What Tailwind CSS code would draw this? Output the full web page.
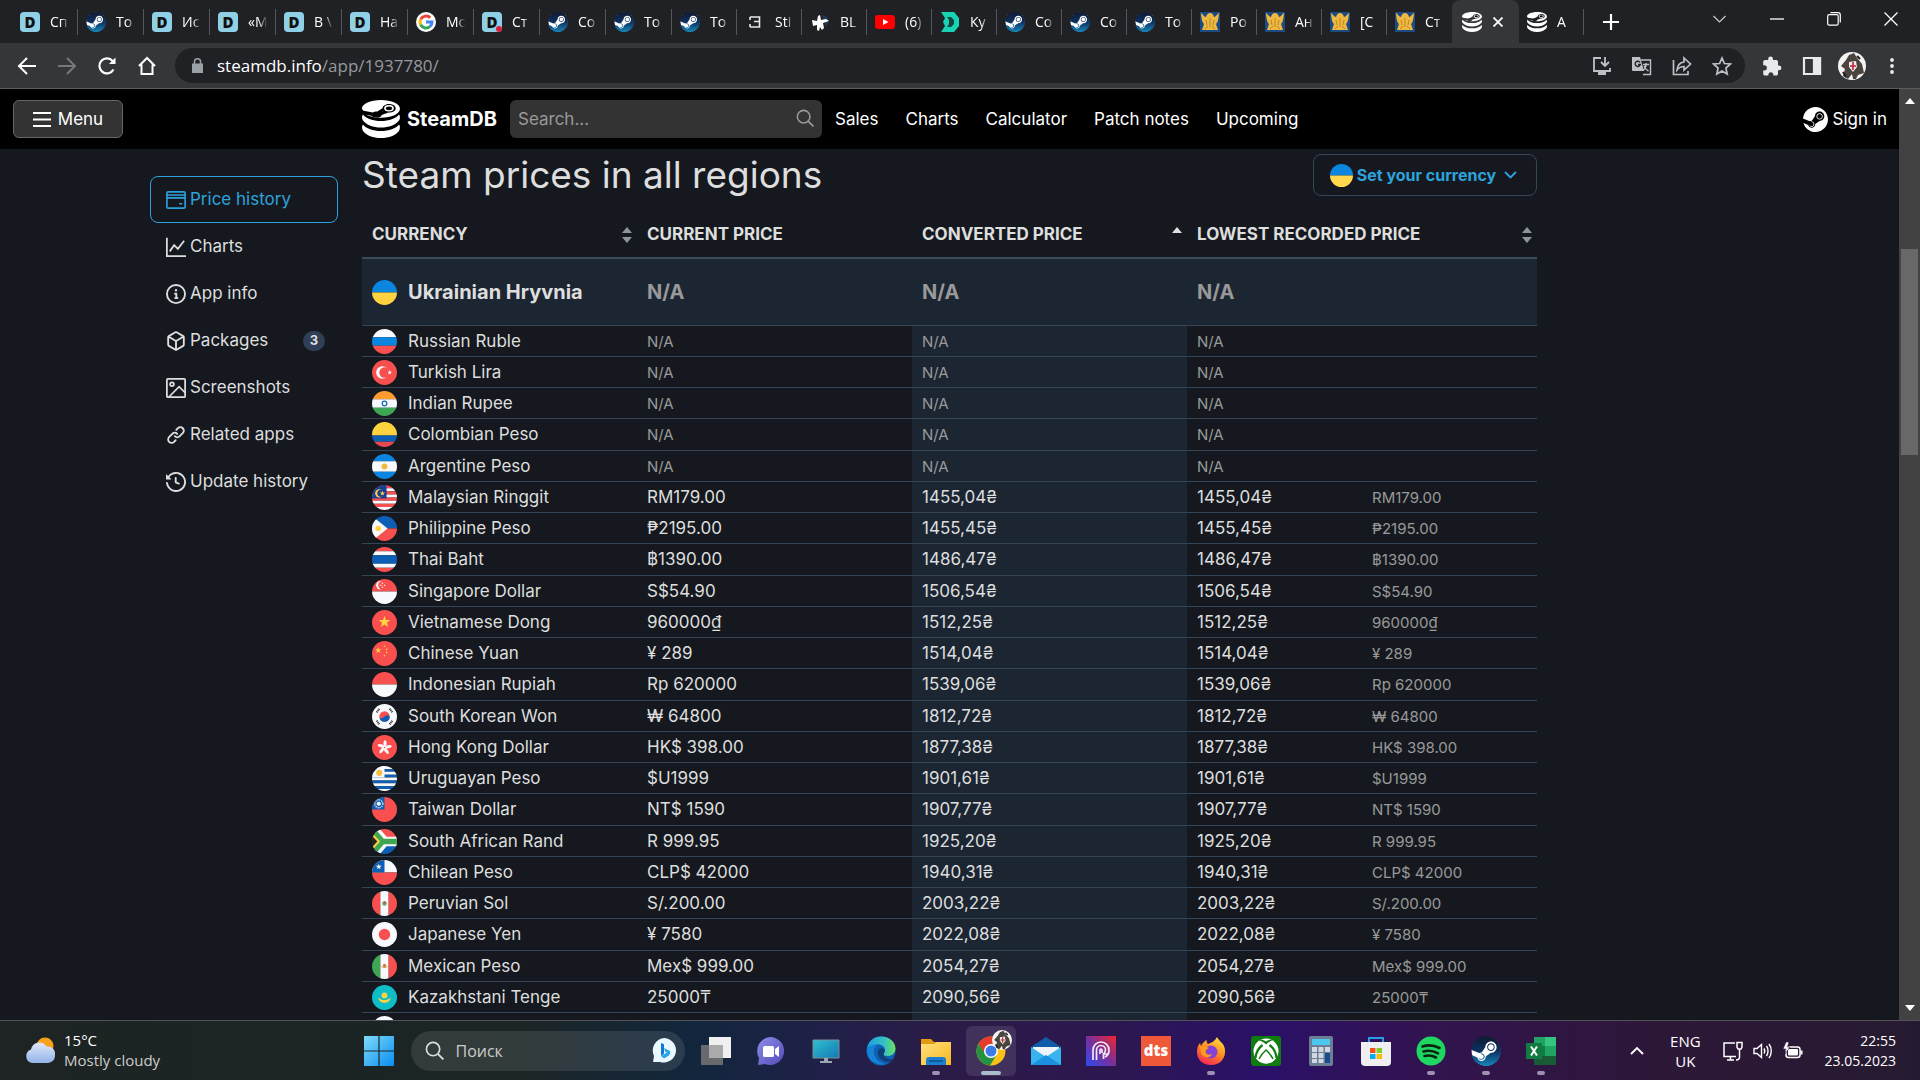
<!DOCTYPE html>
<html lang="en">
<head>
    <meta charset="UTF-8">
    <meta name="viewport" content="width=device-width, initial-scale=1.0">
    <title>Steam prices in all regions - SteamDB</title>
    <script src="https://cdn.jsdelivr.net/npm/@tailwindcss/browser@4"></script>
</head>
<body class="h-screen flex flex-col overflow-hidden bg-[#15191f] text-[#dedede] font-['Inter',sans-serif] text-[17px] leading-[27px]">

    <!-- Icon sprite -->
    <svg class="absolute size-0" aria-hidden="true">
        <defs>
            <linearGradient id="g-steam" x1="0" y1="0" x2="0" y2="1"><stop offset="0" stop-color="#10192f"/><stop offset=".5" stop-color="#0d3160"/><stop offset="1" stop-color="#1684b8"/></linearGradient>
            <linearGradient id="g-win" x1="0" y1="0" x2="1" y2="1"><stop offset="0" stop-color="#7fdcfb"/><stop offset="1" stop-color="#0a8df0"/></linearGradient>
            <linearGradient id="g-sky" x1="0" y1="0" x2="0" y2="1"><stop offset="0" stop-color="#dfe8fb"/><stop offset="1" stop-color="#93b3e8"/></linearGradient>
            <linearGradient id="g-mon" x1="0" y1="0" x2="1" y2="1"><stop offset="0" stop-color="#2fc0d0"/><stop offset="1" stop-color="#1478b4"/></linearGradient>
            <linearGradient id="g-edge" x1="0" y1="0" x2="1" y2="0"><stop offset="0" stop-color="#1b9de2"/><stop offset=".6" stop-color="#35c1c5"/><stop offset="1" stop-color="#6be05c"/></linearGradient>
            <linearGradient id="g-fold" x1="0" y1="0" x2="1" y2="1"><stop offset="0" stop-color="#ffe082"/><stop offset="1" stop-color="#f8b91c"/></linearGradient>
            <linearGradient id="g-n" x1="0" y1="1" x2="1" y2="0"><stop offset="0" stop-color="#2b4bf0"/><stop offset=".5" stop-color="#7b2f9a"/><stop offset="1" stop-color="#f0252d"/></linearGradient>
            <linearGradient id="g-fox" x1=".8" y1="0" x2=".3" y2="1"><stop offset="0" stop-color="#ffe23f"/><stop offset=".5" stop-color="#ff8a1e"/><stop offset="1" stop-color="#f5245c"/></linearGradient>
            <linearGradient id="g-cam" x1="0" y1="0" x2="1" y2="1"><stop offset="0" stop-color="#8f8fe8"/><stop offset="1" stop-color="#5149b8"/></linearGradient>
        </defs>
        <symbol id="i-steam-mark" viewBox="0 0 24 24"><path d="M11.979 0C5.678 0 .511 4.86.022 11.037l6.432 2.658c.545-.371 1.203-.59 1.912-.59.063 0 .125.004.188.006l2.861-4.142V8.91c0-2.495 2.028-4.524 4.524-4.524 2.494 0 4.524 2.031 4.524 4.527s-2.03 4.525-4.524 4.525h-.105l-4.076 2.911c0 .052.004.105.004.159 0 1.875-1.515 3.396-3.39 3.396-1.635 0-3.016-1.173-3.331-2.727L.436 15.27C1.862 20.307 6.486 24 11.979 24c6.627 0 11.999-5.373 11.999-12S18.605 0 11.979 0zM7.54 18.21l-1.473-.61c.262.543.714.999 1.314 1.25 1.297.539 2.793-.076 3.332-1.375.263-.63.264-1.319.005-1.949s-.75-1.121-1.377-1.383c-.624-.26-1.29-.249-1.878-.03l1.523.63c.956.4 1.409 1.5 1.009 2.455-.397.957-1.497 1.41-2.454 1.012H7.54zm11.415-9.303c0-1.662-1.353-3.015-3.015-3.015-1.665 0-3.015 1.353-3.015 3.015 0 1.665 1.35 3.015 3.015 3.015 1.663 0 3.015-1.35 3.015-3.015zm-5.273-.005c0-1.252 1.013-2.266 2.265-2.266 1.249 0 2.266 1.014 2.266 2.266 0 1.251-1.017 2.265-2.266 2.265-1.253 0-2.265-1.014-2.265-2.265z"/></symbol>
        <symbol id="i-steam" viewBox="0 0 24 24"><circle cx="12" cy="12" r="11.500" fill="#fff"/><use href="#i-steam-mark" fill="url(#g-steam)"/></symbol>
        <symbol id="i-db" viewBox="0 0 38 38">
            <path d="M19 0C8.500 0 0 4.200 0 8c0 1 .5 2 1.500 2.800l9.500 1.700c1-.7 2.600-1.100 4.300-1l5.200-3.300c.3-2.600 3.600-4.500 7.200-4.300 3.800.2 6.300 2.300 6 4.800-.3 2.400-3.600 4-7.200 3.800l-6.800 2.400c-.2 1.700-2.500 3-5.300 2.800-1.800-.1-3.400-.8-4.200-1.800L4 14.800C7.500 16.500 13 17.700 19 17.700c10.500 0 19-4 19-9S29.500 0 19 0z"/>
            <ellipse cx="27" cy="8.300" rx="4.800" ry="3.200"/>
            <ellipse cx="27" cy="8.300" rx="3.100" ry="1.900" fill="#000"/>
            <path d="M1 14.500C-.5 16 0 19 1 20.500 4.500 25 11 27.500 19 27.500s14.500-2.500 18-7c1-1.500 1.500-4.500 0-6C34 18.500 27 21 19 21S4 18.500 1 14.500z"/>
            <path d="M1 24.500C-.5 26 0 29 1 31c3.500 4.500 10 7 18 7s14.500-2.500 18-7c1-2 1.500-5 0-6.500C34 28.500 27 31 19 31S4 28.500 1 24.500z"/>
        </symbol>
        <symbol id="i-google" viewBox="0 0 20 20"><circle cx="10" cy="10" r="10" fill="#fff"/><g fill="none" stroke-width="3"><path d="M14.200 5.800A6 6 0 0 0 4.700 7.200" stroke="#ea4335"/><path d="M4.700 7.200a6 6 0 0 0 0 5.600" stroke="#fbbc05"/><path d="M4.700 12.800a6 6 0 0 0 9.300 1.700" stroke="#34a853"/><path d="M14 14.500A6 6 0 0 0 16 10h-6" stroke="#4285f4"/></g></symbol>
        <symbol id="i-box" viewBox="0 0 20 20"><path d="M5 5h9.500v10H5M5 5v3M9 9.500h5.500M5 12v3" fill="none" stroke="#e8e8e8" stroke-width="1.600"/></symbol>
        <symbol id="i-bird" viewBox="0 0 20 20"><path d="M12 3l5 2 2 5-3 5z" fill="#1d3b57"/><path d="M2 8l5 1 1-5 2-1 1 5 5-1 3 2-6 2 1 5-2 2-2-3-1 4-2-1v-5l-4 1z" fill="#fff"/></symbol>
        <symbol id="i-yt" viewBox="0 0 20 20"><rect y="3" width="20" height="14" rx="3" fill="#f00"/><path d="M8 7l5.500 3L8 13z" fill="#fff"/></symbol>
        <symbol id="i-green" viewBox="0 0 20 20"><path d="M1 0h13l5 6v8l-5 6H1l4-6-2-4 2-4z" fill="#17d3b4"/><path d="M7 5h4l3 3v4l-3 3H7l2-3V8z" fill="#14413c"/></symbol>
        <symbol id="i-gold" viewBox="0 0 20 20"><rect width="20" height="20" fill="#1c4a83"/><path d="M1 1c2 1 3 4 5 4 1-3 2-4 4-4s3 1 4 4c2 0 3-3 5-4-.5 6-1 9-3 11l2 6H2l2-6C2 10 1.500 7 1 1z" fill="#efb840"/><path d="M10 6v9M6 8l1 5m7-5l-1 5M5 17l3-3m7 3l-3-3" stroke="#b98527" fill="none"/></symbol>
        <symbol id="i-knight" viewBox="0 0 28 28"><circle cx="14" cy="14" r="14" fill="#f4f4f4"/><path d="M11 3l5-2 3 5 5 6 2 9-6 2-2 4h-3l-1-5-4 5-5-3 2-7-4-3 5-6z" fill="#4b443e"/><path d="M11 10l7-1 1 6-4 5-4-5z" fill="#eee"/><path d="M15 10v8m-3-4h6" stroke="#c0203a" stroke-width="1.600"/><path d="M5 20l3 5m11-21l3 3" stroke="#222" stroke-width="2"/></symbol>
        <symbol id="i-sort" viewBox="0 0 10 16"><path d="M5 0l5 6H0zM5 16l5-6H0z"/></symbol>
        <symbol id="i-search" viewBox="0 0 16 16"><circle cx="6.800" cy="6.800" r="5.600" fill="none" stroke="currentColor" stroke-width="1.400"/><path d="M11 11l4.500 4.500" stroke="currentColor" stroke-width="1.600"/></symbol>
    </svg>

    <!-- Browser tabs -->
    <header class="shrink-0 bg-[#202124] font-['Open_Sans',sans-serif]">
        <div class="h-[43px] flex items-center pl-3">
            <div id="tabs" class="flex h-full items-center"></div>
            <button class="w-[54px] flex justify-center" aria-label="New tab">
                <svg class="size-4" viewBox="0 0 16 16" stroke="#fff" stroke-width="2.200"><path d="M8 0v16M0 8h16"/></svg>
            </button>
            <div class="ml-auto flex h-full items-center pb-[5px]">
                <button class="w-[57px] flex justify-center" aria-label="Search tabs"><svg class="w-[13px] h-2" viewBox="0 0 13 8" fill="none" stroke="#ccc" stroke-width="1.200"><path d="M.5 1l6 6 6-6"/></svg></button>
                <button class="w-[57px] flex justify-center" aria-label="Minimize"><svg class="w-[14px] h-3" viewBox="0 0 14 12" stroke="#fff" stroke-width="1.300"><path d="M0 6h14"/></svg></button>
                <button class="w-[57px] flex justify-center" aria-label="Restore"><svg class="size-[14px]" viewBox="0 0 14 14" fill="none" stroke="#fff" stroke-width="1.200"><rect x=".7" y="2.700" width="10.500" height="10.500" rx="1.500"/><path d="M3.500 .7H11a2.300 2.300 0 0 1 2.300 2.300v7.500"/></svg></button>
                <button class="w-[58px] flex justify-center" aria-label="Close"><svg class="size-[14px]" viewBox="0 0 14 14" stroke="#fff" stroke-width="1.300"><path d="M.5.5l13 13m0-13l-13 13"/></svg></button>
            </div>
        </div>

        <!-- Address bar -->
        <div class="h-[46px] flex items-center bg-[#35363a] border-b border-[#5b5c5f] pl-[17px] pr-2">
            <div class="flex items-center gap-[20px] w-[158px] text-white">
                <button aria-label="Back"><svg class="size-5" viewBox="0 0 20 20" fill="none" stroke="currentColor" stroke-width="2"><path d="M19 10H3m7-8l-8 8 8 8"/></svg></button>
                <button class="text-[#77787b]" aria-label="Forward"><svg class="size-5" viewBox="0 0 20 20" fill="none" stroke="currentColor" stroke-width="2"><path d="M1 10h16m-7-8l8 8-8 8"/></svg></button>
                <button aria-label="Reload"><svg class="size-5" viewBox="0 0 20 20" fill="none" stroke="currentColor" stroke-width="2.200"><path d="M16.500 13.500A7.500 7.500 0 1 1 15.600 5l2 2"/><path d="M18.500 1.500v6.500H12z" fill="currentColor" stroke="none"/></svg></button>
                <button aria-label="Home"><svg class="size-5" viewBox="0 0 20 20" fill="none" stroke="currentColor" stroke-width="2"><path d="M2 10l8-8 8 8M4.500 8.500V18h11V8.500"/></svg></button>
            </div>
            <div class="flex-1 h-[35px] rounded-full bg-[#202124] flex items-center pl-[17px] pr-[13px]">
                <svg class="w-[11px] h-[15px] mr-[14px]" viewBox="0 0 11 15" fill="#9aa0a6"><path d="M0 5.500h11V15H0z"/><path d="M2.500 6V3.800a3 3 0 0 1 6 0V6" fill="none" stroke="#9aa0a6" stroke-width="1.500"/></svg>
                <p class="flex-1 text-[17px] text-[#969a9e]"><span class="text-white">steamdb.info</span>/app/1937780/</p>
                <div class="flex items-center gap-5 text-[#bdc1c6]">
                    <button aria-label="Install"><svg class="size-5" viewBox="0 0 20 20" fill="none" stroke="currentColor" stroke-width="1.800"><path d="M9 2H2v13h16v-3M13 1v9m-4-4l4 4 4-4"/><path d="M6 17.500h8" stroke-width="3"/></svg></button>
                    <button aria-label="Translate"><svg class="size-5" viewBox="0 0 20 20" fill="none" stroke="currentColor" stroke-width="1.400"><path d="M9 4h9.500v14.500H11"/><path d="M0 1h8l4 14H1a1 1 0 0 1-1-1z" fill="currentColor" stroke="none"/><path d="M8 6.500a2.600 2.600 0 1 0 .3 2H6" stroke="#202124"/><path d="M11 8.500h6M14 7v1.500c0 3-1.500 5-3 6m1-4.500c1 2.500 2.500 4 4.500 5"/></svg></button>
                    <button aria-label="Share"><svg class="size-5" viewBox="0 0 20 20" fill="none" stroke="currentColor" stroke-width="1.700"><path d="M1.500 4v14.500H16V15"/><path d="M12 2l6.500 6-6.500 6v-3.500c-3 0-5 1-7 3.500.5-4.500 3-7.500 7-8z"/></svg></button>
                    <button aria-label="Bookmark"><svg class="size-5" viewBox="0 0 20 20" fill="none" stroke="currentColor" stroke-width="1.700"><path d="M10 2l2.400 5.500 6 .5-4.500 4 1.300 6L10 14.900 4.800 18l1.300-6-4.500-4 6-.5z"/></svg></button>
                </div>
            </div>
            <div class="flex items-center pl-[7px] text-[#e8eaed] *:w-10 *:flex *:justify-center">
                <button aria-label="Extensions"><svg class="size-5" viewBox="0 0 20 20" fill="currentColor"><path d="M17 9.500h-1V5.800A1.800 1.800 0 0 0 14.200 4H11V2.900a2.400 2.400 0 0 0-4.800 0V4H3a1.800 1.800 0 0 0-1.800 1.800v3.400h1.100a2.600 2.600 0 0 1 0 5.200H1.200v3.300c0 1 .8 1.800 1.800 1.800h3.300v-1.100a2.600 2.600 0 0 1 5.100 0v1.100h2.800c1 0 1.800-.8 1.800-1.800V14.300H17a2.400 2.400 0 0 0 0-4.800z"/></svg></button>
                <button aria-label="Side panel"><svg class="size-5" viewBox="0 0 20 20" fill="none" stroke="currentColor" stroke-width="2.200"><path d="M2 2h16v16H2z"/><path d="M12 2h6v16h-6z" fill="currentColor"/></svg></button>
                <button aria-label="Profile"><svg class="size-7"><use href="#i-knight"/></svg></button>
                <button aria-label="More"><svg class="w-1 h-4" viewBox="0 0 4 16" fill="currentColor"><circle cx="2" cy="2" r="1.900"/><circle cx="2" cy="8" r="1.900"/><circle cx="2" cy="14" r="1.900"/></svg></button>
            </div>
        </div>
    </header>

    <div class="flex-1 min-h-0 flex">
        <div class="flex-1 min-w-0 overflow-hidden">
            <!-- Site header -->
            <nav class="h-[60px] bg-black text-white grid grid-cols-[1fr_1175px_1fr] items-start pt-[11px]">
                <div class="pl-[13px]">
                    <button class="h-[38px] w-[110px] flex items-center justify-center gap-[7px] rounded-md border border-[#666] bg-[#333]">
                        <svg class="w-[18px] h-[15px]" viewBox="0 0 18 15" stroke="#fff" stroke-width="1.800"><path d="M0 1h18M0 7.500h18M0 14h18"/></svg>
                        Menu
                    </button>
                </div>
                <div class="flex items-center h-[38px]">
                    <a href="#" class="flex items-center gap-[7px] w-[148px] text-[20px] font-bold"><svg class="size-[38px]" fill="#fff"><use href="#i-db"/></svg>SteamDB</a>
                    <label class="relative w-[312px]">
                        <input type="search" placeholder="Search..." aria-label="Search" class="w-full h-[38px] rounded-md bg-[#333] px-2 placeholder:text-[#999]">
                        <svg class="absolute right-2 top-[9px] size-[18px] text-[#999]"><use href="#i-search"/></svg>
                    </label>
                    <div class="flex gap-[27px] pl-[13px]">
                        <a href="#">Sales</a>
                        <a href="#">Charts</a>
                        <a href="#">Calculator</a>
                        <a href="#">Patch notes</a>
                        <a href="#">Upcoming</a>
                    </div>
                </div>
                <a href="#" class="flex items-center justify-end gap-[5px] h-[38px] pr-3"><svg class="size-[25px]" fill="#fff"><use href="#i-steam-mark"/></svg>Sign in</a>
            </nav>

            <div class="grid grid-cols-[1fr_1175px_1fr]">
                <!-- Sidebar -->
                <aside class="mt-[27px] mr-6 w-[188px] justify-self-end">
                    <a href="#" class="h-[47px] flex items-center gap-1 px-[15px] rounded-lg border border-[#2ea2dc] text-[#2ea2dc]">
                        <svg class="size-5" viewBox="0 0 16 16" fill="none" stroke="currentColor" stroke-width="1.300"><rect x=".7" y="1.500" width="14.600" height="13" rx="1"/><path d="M.7 4h14.600M.7 6.300h14.600M10.500 11h2.500"/></svg>
                        Price history
                    </a>
                    <a href="#" class="h-[47px] flex items-center gap-1 px-4">
                        <svg class="size-5" viewBox="0 0 16 16" fill="none" stroke="currentColor" stroke-width="1.400"><path d="M.7.500v14.800H16M3 11.500l3.500-5 3 3 5-6.500"/></svg>
                        Charts
                    </a>
                    <a href="#" class="h-[47px] flex items-center gap-1 px-4">
                        <svg class="size-5" viewBox="0 0 16 16" fill="currentColor"><path d="M0 8a8 8 0 1 1 16 0A8 8 0 0 1 0 8Zm8-6.500a6.500 6.500 0 1 0 0 13 6.500 6.500 0 0 0 0-13ZM6.500 7.750A.75.75 0 0 1 7.250 7h1a.75.75 0 0 1 .75.75v2.750h.25a.75.75 0 0 1 0 1.500h-2a.75.75 0 0 1 0-1.500h.25v-2h-.25a.75.75 0 0 1-.75-.75ZM8 6a1 1 0 1 1 0-2 1 1 0 0 1 0 2Z"/></svg>
                        App info
                    </a>
                    <a href="#" class="h-[47px] flex items-center gap-1 pl-4 pr-[13px]">
                        <svg class="size-5" viewBox="0 0 16 16" fill="currentColor"><path d="m8.878.392 5.250 3.045c.54.314.872.89.872 1.514v6.098a1.750 1.750 0 0 1-.872 1.514l-5.250 3.045a1.750 1.750 0 0 1-1.756 0l-5.250-3.045A1.750 1.750 0 0 1 1 11.049V4.951c0-.624.332-1.201.872-1.514L7.122.392a1.750 1.750 0 0 1 1.756 0ZM7.875 1.690l-4.630 2.685L8 7.133l4.755-2.758-4.630-2.685a.248.248 0 0 0-.25 0ZM2.500 5.677v5.372c0 .09.047.171.125.216l4.625 2.683V8.432Zm6.250 8.271 4.625-2.683a.25.25 0 0 0 .125-.216V5.677L8.750 8.432Z"/></svg>
                        Packages
                        <span class="ml-auto w-[22px] h-5 rounded-full bg-[#2f3f56] text-[13px] font-bold flex items-center justify-center">3</span>
                    </a>
                    <a href="#" class="h-[47px] flex items-center gap-1 px-4">
                        <svg class="size-5" viewBox="0 0 16 16" fill="none" stroke="currentColor" stroke-width="1.400"><rect x=".7" y=".7" width="14.600" height="14.600" rx=".8"/><circle cx="4.800" cy="5" r="1.500"/><path d="M2.500 15L10.500 7l5 5"/></svg>
                        Screenshots
                    </a>
                    <a href="#" class="h-[47px] flex items-center gap-1 px-4">
                        <svg class="size-5" viewBox="0 0 16 16" fill="currentColor"><path d="m7.775 3.275 1.250-1.250a3.500 3.500 0 1 1 4.950 4.950l-2.500 2.500a3.500 3.500 0 0 1-4.950 0 .751.751 0 0 1 .018-1.042.751.751 0 0 1 1.042-.018 1.998 1.998 0 0 0 2.830 0l2.500-2.500a2.002 2.002 0 0 0-2.830-2.830l-1.250 1.250a.751.751 0 0 1-1.042-.018.751.751 0 0 1-.018-1.042Zm-4.690 9.640a1.998 1.998 0 0 0 2.830 0l1.250-1.250a.751.751 0 0 1 1.042.018.751.751 0 0 1 .018 1.042l-1.250 1.250a3.500 3.500 0 1 1-4.950-4.950l2.500-2.500a3.500 3.500 0 0 1 4.950 0 .751.751 0 0 1-.018 1.042.751.751 0 0 1-1.042.018 1.998 1.998 0 0 0-2.830 0l-2.500 2.500a1.998 1.998 0 0 0 0 2.830Z"/></svg>
                        Related apps
                    </a>
                    <a href="#" class="h-[47px] flex items-center gap-1 px-4">
                        <svg class="size-5" viewBox="0 0 16 16" fill="currentColor"><path d="m.427 1.927 1.215 1.215a8.002 8.002 0 1 1-1.600 5.685.75.75 0 1 1 1.493-.154 6.500 6.500 0 1 0 1.180-4.458l1.358 1.358A.25.25 0 0 1 3.896 6H.25A.25.25 0 0 1 0 5.750V2.104a.25.25 0 0 1 .427-.177ZM7.750 4a.75.75 0 0 1 .75.75v2.992l2.028.812a.75.75 0 0 1-.557 1.392l-2.500-1A.751.751 0 0 1 7 8.250v-3.500A.75.75 0 0 1 7.750 4Z"/></svg>
                        Update history
                    </a>
                </aside>

                <!-- Price table -->
                <main class="pt-[5px]">
                    <div class="flex items-center justify-between h-[42px]">
                        <h1 class="text-[37px] leading-[42px]">Steam prices in all regions</h1>
                        <button class="h-[42px] w-[224px] flex items-center justify-center gap-1 pr-[3px] rounded-lg border border-[#34465a] text-base font-bold text-[#2ea2dc]">
                            <svg class="size-[23px] rounded-full" viewBox="0 0 24 24"><path fill="#0a86e0" d="M0 0h24v12H0z"/><path fill="#ffd84d" d="M0 12h24v12H0z"/></svg>
                            Set your currency
                            <svg class="ml-1 w-[13px] h-2" viewBox="0 0 13 8" fill="none" stroke="currentColor" stroke-width="1.800"><path d="M1 1l5.500 5.500L12 1"/></svg>
                        </button>
                    </div>
                    <table class="mt-4 w-full table-fixed border-separate border-spacing-0 text-left">
                        <colgroup>
                            <col class="w-[275px]"><col class="w-[275px]"><col class="w-[275px]"><col class="w-[175px]"><col class="w-[175px]">
                        </colgroup>
                        <thead>
                            <tr class="*:h-[47px] *:px-[10px] *:border-b-2 *:border-[#3b4b5c] *:font-bold">
                                <th class="pr-1!"><div class="flex items-center justify-between">CURRENCY <svg class="w-[10px] h-4 mr-[1px]" fill="#8f9499"><use href="#i-sort"/></svg></div></th>
                                <th>CURRENT PRICE</th>
                                <th class="pr-1!"><div class="flex items-center justify-between">CONVERTED PRICE <svg class="w-[10px] h-4 mr-[1px]" viewBox="0 0 10 16" fill="#dedede"><path d="M5 0l5 6H0z"/></svg></div></th>
                                <th colspan="2" class="pr-1!"><div class="flex items-center justify-between">LOWEST RECORDED PRICE <svg class="w-[10px] h-4 mr-[1px]" fill="#8f9499"><use href="#i-sort"/></svg></div></th>
                            </tr>
                        </thead>
                        <tbody id="prices"></tbody>
                    </table>
                </main>
            </div>
        </div>

        <!-- Page scrollbar -->
        <div class="w-[21px] bg-[#424242] flex flex-col items-center py-2">
            <svg class="w-[10px] h-2" viewBox="0 0 10 8" fill="#fff"><path d="M5 1l5 6H0z"/></svg>
            <div class="mt-[144px] w-[17px] h-[206px] bg-[#686868]"></div>
            <svg class="mt-auto w-[10px] h-2" viewBox="0 0 10 8" fill="#fff"><path d="M5 7l5-6H0z"/></svg>
        </div>
    </div>

    <!-- Taskbar -->
    <footer class="h-[60px] shrink-0 border-t border-[#55535a] grid grid-cols-[1fr_auto_1fr] items-center text-sm text-white font-['Open_Sans',sans-serif] bg-[linear-gradient(90deg,#1d2423_0%,#1b2525_27%,#12263c_36%,#202048_43%,#2c1b48_50%,#2c1750_58%,#2a1068_66%,#321350_74%,#2d1738_86%,#251b30_100%)]">
        <div class="flex items-center gap-[9px] pl-[25px] pb-[2px]">
            <svg class="w-[30px] h-[26px]" viewBox="0 0 30 26"><circle cx="20" cy="9" r="8.500" fill="#f7a01d"/><path d="M7 26a7 7 0 0 1-1-13.500A8.500 8.500 0 0 1 21.500 9.500 7.500 7.500 0 0 1 30 18a7.500 7.500 0 0 1-7 8z" fill="url(#g-sky)"/></svg>
            <div class="leading-5 text-[15px]">
                <p>15°C</p>
                <p class="text-[#ccc]">Mostly cloudy</p>
            </div>
        </div>

        <div class="flex items-center">
            <button class="w-[55px] flex justify-center" aria-label="Start"><svg class="size-[30px]" viewBox="0 0 30 30" fill="url(#g-win)"><path d="M0 0h14.400v14.400H0zM15.600 0H30v14.400H15.600zM0 15.600h14.400V30H0zM15.600 15.600H30V30H15.600z"/></svg></button>
            <label class="mx-1 w-[274px] h-10 rounded-full bg-white/10 flex items-center gap-3 pl-[14px] pr-2 text-base">
                <svg class="size-[19px] text-[#ddd] shrink-0"><use href="#i-search"/></svg>
                <input type="text" placeholder="Поиск" aria-label="Поиск" class="flex-1 min-w-0 bg-transparent placeholder:text-[#ccc]">
                <svg class="size-[25px] shrink-0" viewBox="0 0 25 25"><path d="M12.500 0A12.300 12.300 0 1 1 8 24H1l1-6A12.500 12.500 0 0 1 12.500 0z" fill="#e9f8ff"/><path d="M9 5l3 1.200v9.500l-3 2.300z" fill="#1377d8"/><path d="M12 10l6 3c.8 2.500-.5 4-2 5l-4 2.500L9 18l6-3.500-2-1z" fill="#25a7e8"/></svg>
            </label>
            <div id="apps" class="flex items-center"></div>
        </div>

        <div class="flex items-center justify-end pr-6">
            <button class="mr-[26px]" aria-label="Show hidden icons"><svg class="w-[14px] h-[9px]" viewBox="0 0 14 9" fill="none" stroke="#fff" stroke-width="1.900"><path d="M1 8l6-6 6 6"/></svg></button>
            <div class="text-center leading-5 mr-[22px] text-[15px]"><p>ENG</p><p>UK</p></div>
            <div class="flex items-center gap-[10px] mr-[22px]">
                <svg class="size-5" viewBox="0 0 20 20" fill="none" stroke="#fff" stroke-width="1.500"><path d="M12 2H1v13.500h12M4 19h7M7.500 15.500V19M14 1.500h5V6l-1 2h-3l-1-2zM16.500 8v8c0 2-1 3-3.500 3"/></svg>
                <svg class="size-5" viewBox="0 0 20 20" fill="none" stroke="#fff" stroke-width="1.400"><path d="M1 7.500h3l4.500-4v13l-4.500-4H1zM11 7.500c1 1.500 1 3.500 0 5M13.500 5c2 2.800 2 7.200 0 10M16 3c3 4 3 10 0 14"/></svg>
                <svg class="size-5" viewBox="0 0 20 20"><rect x="3" y="6" width="14" height="10.500" rx="2.500" fill="none" stroke="#fff" stroke-width="1.500"/><rect x="5" y="8" width="10" height="6.500" rx="1" fill="#fff"/><path d="M18.500 9.500v4" stroke="#fff" stroke-width="2"/><path d="M3 1L0 8h3l-1 5 5-7H4.500L6 1z" fill="#fff" stroke="#2d1738" stroke-width=".6"/></svg>
            </div>
            <div class="text-right leading-5"><p>22:55</p><p>23.05.2023</p></div>
        </div>
    </footer>

    <script>
        // [icon, title], the icon "d" is a letter tile
        const tabs = [
            ['d', 'Сп'], ['steam', 'То'], ['d', 'Ис'], ['d', '«М'], ['d', 'В \\'], ['d', 'На'],
            ['google', 'Мо'], ['d-live', 'Ст'], ['steam', 'Со'], ['steam', 'То'], ['steam', 'То'],
            ['box', 'Sti'], ['bird', 'BL'], ['yt', '(6)'], ['green', 'Ку'], ['steam', 'Со'],
            ['steam', 'Со'], ['steam', 'То'], ['gold', 'Ро'], ['gold', 'Ан'], ['gold', '[С'],
            ['gold', 'Ст'], ['db', ''], ['db', 'A']
        ];

        function tabIcon(name) {
            if (name === 'd' || name === 'd-live') {
                const dot = name === 'd-live' ? '<i class="absolute right-0 bottom-0 size-[6px] rounded-full bg-[#d6203c]"></i>' : '';
                return `<span class="relative size-5 shrink-0 rounded-sm bg-[#8fd0e6] text-[#111] text-[15px] leading-5 font-extrabold text-center">D${dot}</span>`;
            }
            return `<svg class="size-5 shrink-0" fill="#fff"><use href="#i-${name}"/></svg>`;
        }

        document.getElementById('tabs').innerHTML = tabs.map(([icon, title], i) => {
            if (!title) {
                return `<button class="h-full w-[67px] flex items-center gap-[11px] pl-[10px] rounded-t-lg bg-[#35363a]">${tabIcon(icon)}
                    <svg class="size-[10px]" viewBox="0 0 10 10" stroke="#fff" stroke-width="1.800"><path d="M.5.5l9 9m0-9l-9 9"/></svg></button>`;
            }
            const width = i < 10 ? 'w-[66px]' : 'w-[65px]';
            const edge = i === 21 ? '' : 'border-r border-[#55575b]';
            return `<button class="${width} ${edge} h-[26px] flex items-center gap-[10px] pl-2">${tabIcon(icon)}
                <span class="w-6 whitespace-nowrap text-left text-sm text-white [mask-image:linear-gradient(90deg,#000_45%,transparent_80%)]">${title}</span></button>`;
        }).join('');

        const R = '#f94f4f', W = '#f7f9fc', B = '#0a86e0', N = '#0c5fb4', Y = '#ffd23f', G = '#3fa654';
        const rect = (x, y, w, h, c) => `<path fill="${c}" d="M${x} ${y}h${w}v${h}h-${w}z"/>`;
        const dot = (x, y, r, c) => `<circle cx="${x}" cy="${y}" r="${r}" fill="${c}"/>`;
        const star = (x, y, r, c) => {
            let pts = '';
            for (let i = 0; i < 10; i++) {
                const a = Math.PI * i / 5, k = i % 2 ? r * 0.4 : r;
                pts += `${(x + k * Math.sin(a)).toFixed(1)},${(y - k * Math.cos(a)).toFixed(1)} `;
            }
            return `<polygon points="${pts}" fill="${c}"/>`;
        };
        // rows of horizontal stripes: [height, colour]
        const bands = (...list) => { let y = 0; return list.map(([h, c]) => { const s = rect(0, y, 24, h, c); y += h; return s; }).join(''); };

        const flags = {
            ua: bands([12, B], [12, Y]),
            ru: bands([8, W], [8, B], [8, R]),
            tr: rect(0, 0, 24, 24, R) + dot(10, 12, 6, W) + dot(12, 12, 5, R) + star(17, 12, 2.4, W),
            in: bands([8, '#ff9b2e'], [8, W], [8, G]) + '<circle cx="12" cy="12" r="2.200" fill="none" stroke="#1266b8" stroke-width="1.200"/>',
            co: bands([13, Y], [6, N], [5, '#e8484e']),
            ar: bands([7, B], [10, W], [7, B]) + dot(12, 12, 2.8, '#f4b845'),
            my: bands([3, R], [3, W], [3, R], [3, W], [3, R], [3, W], [3, R], [3, W]) + rect(0, 0, 14, 13, '#1a3f93') + dot(7, 8, 4, Y) + dot(8.5, 8, 3.4, '#1a3f93') + star(10, 8, 2.6, Y),
            ph: bands([12, N], [12, R]) + `<path fill="${W}" d="M0 0l15 12L0 24z"/>` + dot(6, 12, 2.6, Y),
            th: bands([4, R], [4, W], [8, N], [4, W], [4, R]),
            sg: bands([12, R], [12, W]) + dot(8, 6, 4, W) + dot(10, 6, 4, R) + dot(10, 4, .7, W) + dot(12, 6, .7, W) + dot(10, 8, .7, W) + dot(8.5, 6, .7, W),
            vn: rect(0, 0, 24, 24, R) + star(12, 11.5, 6, Y),
            cn: rect(0, 0, 24, 24, R) + star(6, 9, 3.2, Y) + dot(12, 5, .8, Y) + dot(14, 8, .8, Y) + dot(14, 11, .8, Y) + dot(12, 14, .8, Y),
            id: bands([12, R], [12, W]),
            kr: rect(0, 0, 24, 24, W) + dot(12, 12, 5, R) + '<path fill="#0c5fb4" d="M7.200 13.500A5 5 0 0 0 17 12c-1.500-2-4-1-5 0s-3 2.500-4.800 1.500z"/><path stroke="#333" stroke-width="2" stroke-dasharray="1 .6" d="M4.500 8L7 4.500M17 4.500L19.500 8M4.500 16L7 19.500M17 19.500l2.500-3.500"/>',
            hk: rect(0, 0, 24, 24, R) + [0, 72, 144, 216, 288].map(a => `<ellipse cx="12.500" cy="8.300" rx="1.500" ry="3.300" fill="${W}" transform="rotate(${a} 12 12)"/>`).join(''),
            uy: bands([3, W], [2.5, N], [3, W], [2.5, N], [3, W], [2.5, N], [3, W], [2.5, N], [2, W]) + rect(0, 0, 12, 11, W) + dot(7, 6.5, 3, '#f7c043'),
            tw: rect(0, 0, 24, 24, R) + rect(0, 0, 12, 12, N) + '<circle cx="6.500" cy="6.500" r="3.800" fill="none" stroke="#fff" stroke-width="1.400" stroke-dasharray="1 1"/>' + dot(6.5, 6.5, 2, W),
            za: bands([12, R], [12, N]) + `<path d="M0-2l12 14L0 26M11 12h14" fill="none" stroke="${W}" stroke-width="9"/><path d="M0 2l9 10-9 10z" fill="#222"/><path d="M-2-2l12 14L-2 26M10 12h15" fill="none" stroke="${G}" stroke-width="5.500"/><path d="M0 5l6.500 7L0 19" fill="none" stroke="${Y}" stroke-width="2"/>`,
            cl: rect(0, 0, 24, 12, W) + rect(0, 12, 24, 12, R) + rect(0, 0, 12, 12, N) + star(6.5, 6.5, 3, W),
            pe: rect(0, 0, 8, 24, R) + rect(8, 0, 8, 24, W) + rect(16, 0, 8, 24, R) + dot(12, 12, 2.2, '#7f9a6e') + dot(12, 11, 1, '#b0543c'),
            jp: rect(0, 0, 24, 24, W) + dot(12, 12, 5.5, R),
            mx: rect(0, 0, 8, 24, G) + rect(8, 0, 8, 24, W) + rect(16, 0, 8, 24, R) + '<path d="M8.500 11c2 2 5 2 7 0-.5 3-6.500 3-7 0z" fill="#c98a3c"/>' + dot(12, 11, 1.6, '#d07a3a'),
            kz: rect(0, 0, 24, 24, '#0fbdc9') + dot(12, 10, 2.8, Y) + `<path d="M6 12c2 2 4 2.500 6 2.500s4-.5 6-2.500c-.5 3.500-3 5-6 5s-5.500-1.500-6-5z" fill="${Y}"/>`,
            us: bands([4, W], [2, R], [2, W], [2, R], [14, W])
        };

        // [flag, currency, current price, converted price]
        const prices = [
            ['ua', 'Ukrainian Hryvnia'], ['ru', 'Russian Ruble'], ['tr', 'Turkish Lira'], ['in', 'Indian Rupee'],
            ['co', 'Colombian Peso'], ['ar', 'Argentine Peso'],
            ['my', 'Malaysian Ringgit', 'RM179.00', '1455,04₴'],
            ['ph', 'Philippine Peso', '₱2195.00', '1455,45₴'],
            ['th', 'Thai Baht', '฿1390.00', '1486,47₴'],
            ['sg', 'Singapore Dollar', 'S$54.90', '1506,54₴'],
            ['vn', 'Vietnamese Dong', '960000₫', '1512,25₴'],
            ['cn', 'Chinese Yuan', '¥ 289', '1514,04₴'],
            ['id', 'Indonesian Rupiah', 'Rp 620000', '1539,06₴'],
            ['kr', 'South Korean Won', '₩ 64800', '1812,72₴'],
            ['hk', 'Hong Kong Dollar', 'HK$ 398.00', '1877,38₴'],
            ['uy', 'Uruguayan Peso', '$U1999', '1901,61₴'],
            ['tw', 'Taiwan Dollar', 'NT$ 1590', '1907,77₴'],
            ['za', 'South African Rand', 'R 999.95', '1925,20₴'],
            ['cl', 'Chilean Peso', 'CLP$ 42000', '1940,31₴'],
            ['pe', 'Peruvian Sol', 'S/.200.00', '2003,22₴'],
            ['jp', 'Japanese Yen', '¥ 7580', '2022,08₴'],
            ['mx', 'Mexican Peso', 'Mex$ 999.00', '2054,27₴'],
            ['kz', 'Kazakhstani Tenge', '25000₸', '2090,56₴'],
            ['us', '', '', '']
        ];

        document.getElementById('prices').innerHTML = prices.map(([code, name, price, converted], i) => {
            const flag = `<svg class="size-[25px] rounded-full shrink-0" viewBox="0 0 24 24">${flags[code]}</svg>`;
            const row = i === 0
                ? '*:h-[67px] bg-[#1c2633] text-[20px] font-bold *:not-first:text-[#999]'
                : '*:h-[31px] nth-[4n+1]:*:h-8';
            const na = price === undefined ? (i === 0 ? '' : 'text-[15px] text-[#999]') : '';
            return `<tr class="${row} *:px-[10px] *:border-b *:border-[#364555]">
                <td><div class="flex items-center gap-[11px] h-[25px]">${flag}${name}</div></td>
                <td class="${na}">${price ?? 'N/A'}</td>
                <td class="${na} bg-[#1c2633]">${converted ?? 'N/A'}</td>
                <td class="${na}">${converted ?? 'N/A'}</td>
                <td class="text-[15px] text-[#999]">${price ?? ''}</td>
            </tr>`;
        }).join('');

        // [label, drawing, state]
        const apps = [
            ['Task view', '<path fill="#f0f0f0" d="M8 1h22v21H8z"/><path fill="#777" fill-opacity=".85" d="M0 9h22v20H0z"/><path fill="#aaa" d="M8 9h14v13H8z"/>'],
            ['Chat', '<path d="M15 1a14 14 0 1 1-6 27l-7 1 1-7A14 14 0 0 1 15 1z" fill="url(#g-cam)"/><rect x="7" y="10" width="11" height="11" rx="1.500" fill="#fff"/><path d="M19 13l4-3v11l-4-3z" fill="#fff"/>'],
            ['Monitor', '<path fill="url(#g-mon)" stroke="#7d8f9a" d="M2 4h26v18H2z"/><path d="M13 22h4v3h4v2H9v-2h4z" fill="#9aa6ad"/>'],
            ['Edge', '<circle cx="15" cy="15" r="14.500" fill="#0f5fb4"/><path d="M1 13C2 5 8 .5 15 .5c9 0 14.500 6 14.500 12 0 5-4 7.500-8 7.500-3 0-4-1-4-2 0-.8 1.500-1.500 1.500-4 0-3-3-5.500-7-5.500S3 10 1 13z" fill="url(#g-edge)"/><path d="M1 13c2-3 7-4.500 11-4.500-4 2-5 6-3.500 10.500 1.500 5 6 8 11 9A14.500 14.500 0 0 1 1 13z" fill="#1583d6"/><path d="M12 15c-1 5 3 11 10 11 3 0 5-2 6-3.500-4 1.500-9 .5-10.500-4-.5-1 1.500-2 1.500-4.500-3-3-6-2-7 1z" fill="#133f78"/>'],
            ['Explorer', '<path d="M0 3h10l3 3h17v23H0z" fill="#e39a12"/><path d="M0 8h13l3-2h14v23H0z" fill="url(#g-fold)"/><path d="M5 29v-5a3 3 0 0 1 3-3h14a3 3 0 0 1 3 3v5z" fill="#1a7fd0"/><path d="M8 25h14" stroke="#0a4f8c" stroke-width="1.500"/>', 'open'],
            ['Chrome', '<circle cx="15" cy="15" r="14.500" fill="#fbc116"/><path d="M15 .5A14.500 14.500 0 0 0 2.400 7.800L9 19l6-11h12.500A14.500 14.500 0 0 0 15 .5z" fill="#e33b2e"/><path d="M2.400 7.800A14.500 14.500 0 0 0 14 29.500L20.500 19 9 18z" fill="#229342"/><circle cx="15" cy="15" r="7" fill="#fff"/><circle cx="15" cy="15" r="5.500" fill="#3b7de8"/>', 'active'],
            ['Mail', '<path d="M0 11L15 1l15 10v8H0z" fill="#0f5ca8"/><path d="M2 11h26v9H2z" fill="#eef4fa"/><path d="M0 11l15 10 15-10v18H0z" fill="#37b4f0"/><path d="M0 29l15-10 15 10z" fill="#1c8fe0"/>'],
            ['Music', '<path fill="url(#g-n)" d="M0 0h30v30H0z"/><path d="M7 24V14a8 8 0 0 1 16 0c0 4-2 6-4 7M10.500 24V14a4.500 4.500 0 0 1 9 0c0 2-1 3-2 4m0 0h4m-4-1v6M14 18v-4a1 1 0 0 1 2 0v3" fill="none" stroke="#f3eaf6" stroke-width="1.700"/>'],
            ['DTS', '<path fill="#f0583a" d="M0 0h30v30H0z"/><text x="15" y="20" text-anchor="middle" font-size="15" font-weight="800" fill="#fff">dts</text>'],
            ['Firefox', '<path d="M21 1c1 3 5 5 7 9 3 7 0 19-13 19C6 29 1 23 1 16c0-4 1-7 3-9l1 3c1-2 3-5 6-6-1 2 0 3 1 4 3-1 7-3 9-7z" fill="url(#g-fox)"/><circle cx="15" cy="16" r="6.500" fill="#8243d6"/><path d="M4 11c4-2 7 0 9 1-3 1-4 3-3 5s4 2 6 1c-1 4-9 5-11-1z" fill="#ff9a1f"/>', 'open'],
            ['Xbox', '<rect width="30" height="30" rx="3" fill="#107c10"/><circle cx="15" cy="15" r="12.500" fill="#fff"/><path d="M7 4c3-1.500 6 0 8 1.500C17 4 20 2.500 23 4c-3 .5-6 2.500-8 4.500C13 6.500 10 4.500 7 4z" fill="#107c10"/><path d="M11.500 9C7.500 12 5 17 4.500 22M18.500 9c4 3 6.500 8 7 13" stroke="#107c10" stroke-width="2.200" fill="none"/><path d="M15 13c4 3.500 7 8 8 11.500-4 4-12 4-16 0C8 21 11 16.500 15 13z" fill="#fff"/><path d="M8 23c2-4 4-6.500 7-9 3 2.500 5 5 7 9" fill="none" stroke="#107c10" stroke-width="1.500"/>'],
            ['Calculator', '<rect x="3" width="24" height="30" rx="2" fill="#6d7d92"/><path fill="#4cc8f0" d="M6 3h18v6H6z"/><path fill="#cfd8e3" d="M6 11h5v5H6zM12.500 11h5v5h-5zM6 17h5v5H6zM12.500 17h5v5h-5zM6 23h5v4H6zM12.500 23h5v4h-5zM19 11h5v5h-5z"/><path fill="#164f8f" d="M19 17h5v10h-5z"/>'],
            ['Store', '<path d="M8 7V2h14v5" fill="none" stroke="#2b9be8" stroke-width="2"/><path d="M0 6h30v20a4 4 0 0 1-4 4H4a4 4 0 0 1-4-4z" fill="#efeff1"/><path fill="#f1511b" d="M9 12h5.500v5H9z"/><path fill="#80cc28" d="M15.500 12H21v5h-5.500z"/><path fill="#00adef" d="M9 18h5.500v5H9z"/><path fill="#fbbc09" d="M15.500 18H21v5h-5.500z"/>'],
            ['Spotify', '<circle cx="15" cy="15" r="14.500" fill="#1ed760"/><path d="M6.500 10.500c6-2 12-1 17 1.500M7.500 15.500c5-1.500 10-.7 14.500 1.800M8.500 20c4-1 8-.5 11.500 1.500" fill="none" stroke="#0c2014" stroke-width="2.600" stroke-linecap="round"/>', 'open'],
            ['Steam', '<use href="#i-steam" width="30" height="30"/>', 'open'],
            ['Excel', '<path fill="#21a366" d="M8 1h22v28H8z"/><path fill="#33c481" d="M19 1h11v9H19z"/><path fill="#107c41" d="M8 10h11v10H8z"/><path fill="#185c37" d="M8 20h22v9H8z"/><path fill="#107c41" d="M0 7h16v16H0z"/><path d="M5 10.500l6 9m0-9l-6 9" stroke="#fff" stroke-width="2"/>', 'open']
        ];

        document.getElementById('apps').innerHTML = apps.map(([label, drawing, state]) => {
            const bar = state === 'active' ? '<i class="absolute bottom-[1px] w-5 h-1 rounded-full bg-[#a9bccb]"></i>'
                : state === 'open' ? '<i class="absolute bottom-[1px] w-2 h-1 rounded-full bg-[#a090b4]"></i>' : '';
            const back = state === 'active' ? 'bg-white/10' : '';
            const badge = state === 'active' ? '<svg class="absolute right-1 top-1 size-5"><use href="#i-knight"/></svg>' : '';
            return `<button class="w-[55px] flex justify-center" aria-label="${label}">
                <span class="relative size-[50px] rounded-md flex items-center justify-center ${back}"><svg class="size-[30px]" viewBox="0 0 30 30">${drawing}</svg>${badge}${bar}</span>
            </button>`;
        }).join('');
    </script>
</body>
</html>
